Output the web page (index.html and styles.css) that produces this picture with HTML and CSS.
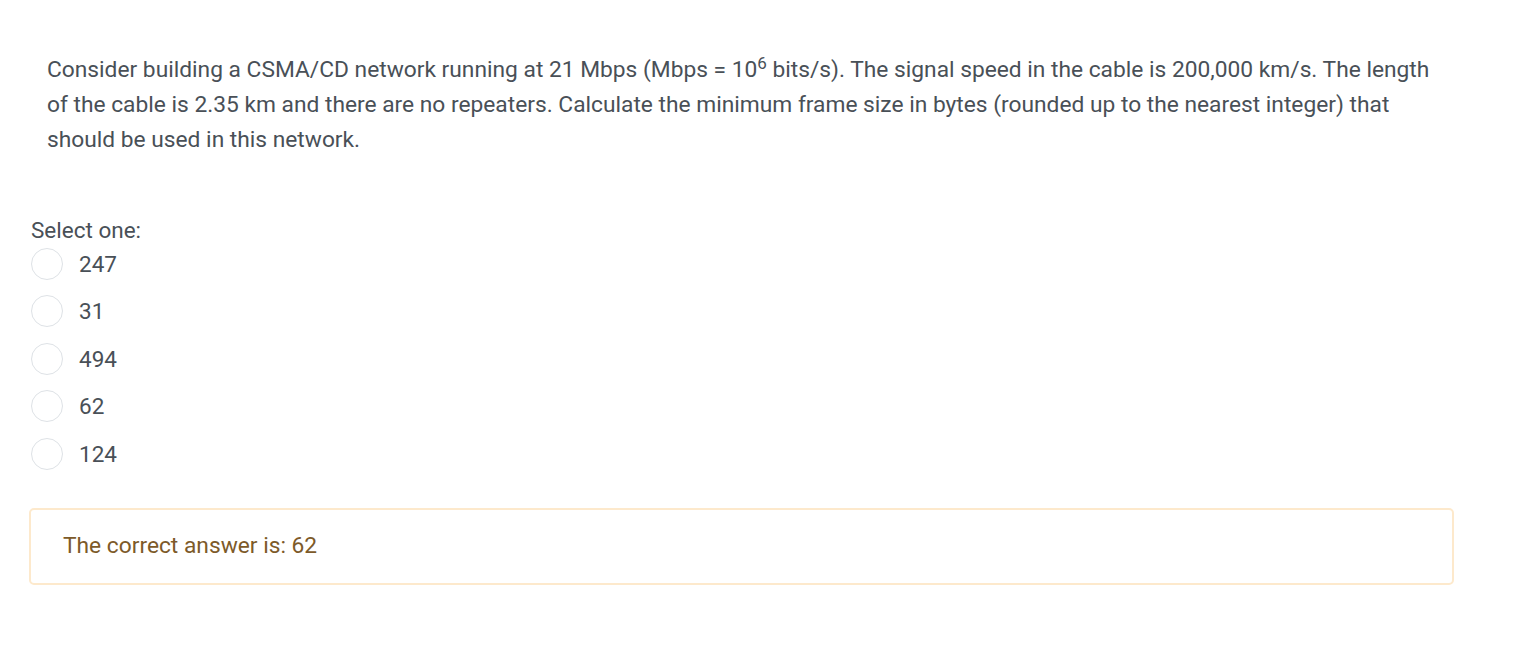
FILE: index.html
```html
<!DOCTYPE html>
<html>
<head>
<meta charset="utf-8">
<link rel="stylesheet" href="styles.css">
</head>
<body>
<div class="page">
  <div class="question">
    <p class="qtext">Consider building a CSMA/CD network running at 21 Mbps (Mbps = 10<sup>6</sup> bits/s). The signal speed in the cable is 200,000 km/s. The length of the cable is 2.35 km and there are no repeaters. Calculate the minimum frame size in bytes (rounded up to the nearest integer) that should be used in this network.</p>
  </div>
  <div class="ablock">
    <div class="prompt">Select one:</div>
    <div class="answers">
      <label class="option"><span class="radio"></span><span class="label">247</span></label>
      <label class="option"><span class="radio"></span><span class="label">31</span></label>
      <label class="option"><span class="radio"></span><span class="label">494</span></label>
      <label class="option"><span class="radio"></span><span class="label">62</span></label>
      <label class="option"><span class="radio"></span><span class="label">124</span></label>
    </div>
  </div>
  <div class="outcome">
    <div class="rightanswer">The correct answer is: 62</div>
  </div>
</div>
</body>
</html>
```

FILE: styles.css
```css
html, body {
  margin: 0;
  padding: 0;
  background: #ffffff;
}
body {
  font-family: Roboto, "Noto Sans", sans-serif;
  font-size: 22.5px;
  color: #495057;
}
.page {
  padding: 52px 74px 0 29px;
}
.question {
  padding-left: 18px;
  padding-right: 10px;
}
.qtext {
  margin: 0;
  font-size: 22.75px;
  line-height: 35px;
}
.qtext sup {
  font-size: 17px;
  line-height: 0;
  vertical-align: 8px;
}
.ablock {
  margin-top: 57px;
  padding-left: 2px;
}
.prompt {
  line-height: 26px;
  padding-top: 3px;
  margin-bottom: -3px;
}
.answers {
  display: flex;
  flex-direction: column;
}
.option {
  display: flex;
  align-items: center;
  height: 47.5px;
}
.radio {
  box-sizing: border-box;
  width: 32px;
  height: 32px;
  border: 1px solid #dee2e6;
  border-radius: 50%;
  flex: none;
}
.label {
  margin-left: 16px;
}
.outcome {
  margin-top: 30px;
  box-sizing: border-box;
  height: 77px;
  display: flex;
  align-items: center;
  border: 2px solid #fde9cc;
  border-radius: 5px;
  padding: 0 32px;
  color: #7d5a29;
  font-size: 22.75px;
}
.rightanswer {
  line-height: 30px;
}
```
